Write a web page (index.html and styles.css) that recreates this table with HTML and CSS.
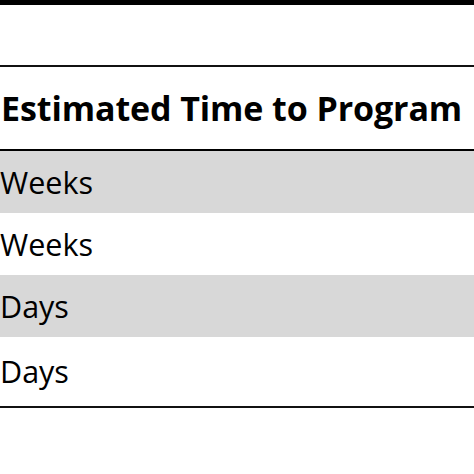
FILE: index.html
```html
<!DOCTYPE html>
<html>
<head>
<meta charset="utf-8">
<link rel="stylesheet" href="styles.css">
</head>
<body>
<div class="topbar"></div>
<div class="spacer"></div>
<table class="tbl">
  <thead>
    <tr><th>Estimated Time to Program</th></tr>
  </thead>
  <tbody>
    <tr class="shade"><td>Weeks</td></tr>
    <tr><td>Weeks</td></tr>
    <tr class="shade"><td>Days</td></tr>
    <tr class="last"><td>Days</td></tr>
  </tbody>
</table>
</body>
</html>
```
FILE: styles.css
```css
html, body {
  margin: 0;
  padding: 0;
  background: #fff;
  font-family: "Open Sans", "Noto Sans", sans-serif;
  color: #000;
}
.topbar {
  height: 5px;
  background: #000;
}
.spacer {
  height: 60px;
}
.tbl {
  width: 474px;
  border-collapse: collapse;
  border-top: 2px solid #111;
  border-bottom: 2px solid #111;
}
.tbl th {
  text-align: left;
  font-weight: 700;
  font-size: 34px;
  line-height: 40px;
  height: 82px;
  padding: 0 0 0 1px;
  border-bottom: 2px solid #000;
  white-space: nowrap;
  letter-spacing: -0.1px;
}
.tbl td {
  font-size: 30.5px;
  line-height: 36px;
  height: 62px;
  padding: 0;
  vertical-align: middle;
}
.tbl tr.shade td {
  background: #d8d8d8;
}
.tbl tr.last td {
  height: 67px;
  padding-bottom: 2px;
}
```
